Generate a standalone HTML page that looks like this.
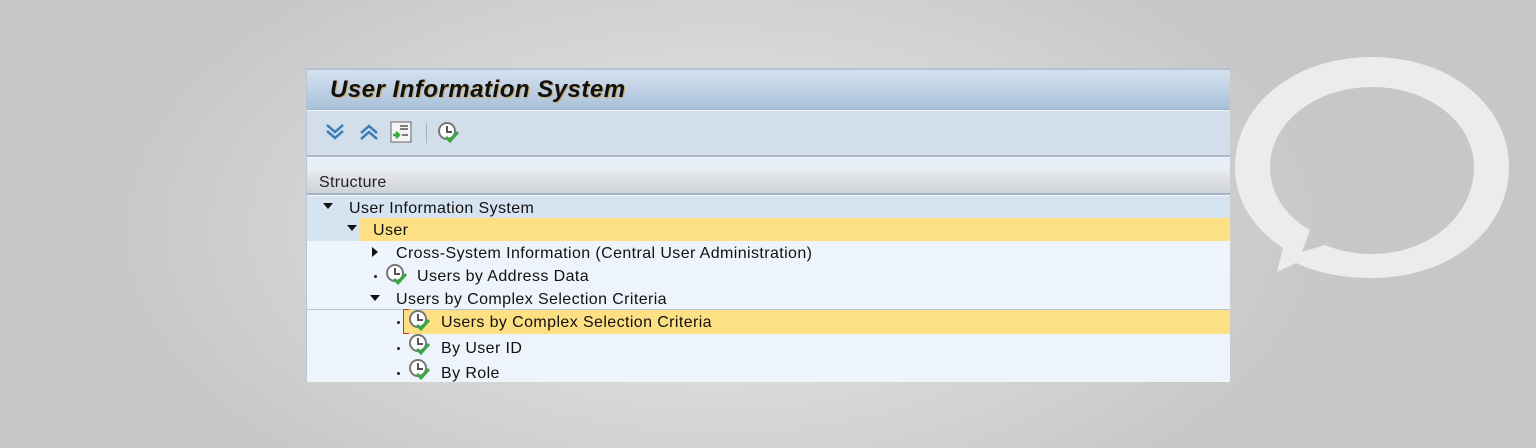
<!DOCTYPE html>
<html><head><meta charset="utf-8"><style>
*{margin:0;padding:0;box-sizing:border-box}
body{width:1536px;height:448px;overflow:hidden;position:relative;font-family:"Liberation Sans",sans-serif;
background:radial-gradient(ellipse 620px 330px at 720px 230px,#e6e6e6 0%,#dadada 45%,#c7c7c7 100%);}
.panel{position:absolute;left:306px;top:68px;width:924px;height:314px;background:#eef4fb;overflow:hidden;border-left:1px solid #b9c6d4}
.title{position:absolute;left:0;top:0;width:100%;height:42px;background:linear-gradient(#d5e1ed,#a9c1da);border-top:2px solid #b3c3d5;border-bottom:1px solid #9fb5cc}
.title span{position:absolute;left:23px;top:6px;font-size:24px;letter-spacing:0.5px;font-weight:bold;font-style:italic;color:#111;text-shadow:1px 1px 1px #c9a860}
.tb{position:absolute;left:0;top:43px;width:100%;height:46px;background:#d2dfeb;border-bottom:2px solid #aab9c9}
.gap{position:absolute;left:0;top:90px;width:100%;height:14px;background:#e8eef5}
.hdr{position:absolute;left:0;top:104px;width:100%;height:23px;background:linear-gradient(#e6e8eb,#cfd3d8);border-bottom:2px solid #a5b3c2;font-size:16px;letter-spacing:0.3px;color:#222;padding:2px 12px}
.row{position:absolute;left:0;width:100%;height:23px;font-size:16px;letter-spacing:0.4px;color:#111;line-height:25px;white-space:nowrap}
.row .t{position:absolute}
.tri{position:absolute;width:0;height:0}
.dn{border-left:5px solid transparent;border-right:5px solid transparent;border-top:6px solid #111}
.rt{border-top:5px solid transparent;border-bottom:5px solid transparent;border-left:6px solid #111}
.dot{position:absolute;width:3px;height:3px;background:#222;border-radius:50%}
.ic{position:absolute}
</style></head><body>
<svg style="position:absolute;left:1230px;top:50px" width="300" height="240">
<path fill="#ececec" fill-rule="evenodd" d="M142 7 C220 7 279 55 279 117 C279 180 220 228 142 228 C110 228 86 222 66 213 L47 222 L53 198 C23 178 5 150 5 117 C5 55 64 7 142 7 Z M142 37 C85 37 40 73 40 117 C40 145 57 167 80 180 L72 202 L95 195 C110 201 126 204 142 204 C200 204 244 165 244 117 C244 73 200 37 142 37 Z"/>
</svg>
<div class="panel">
 <div class="title"><span>User Information System</span></div>
 <div class="tb">
  <svg class="ic" style="left:18px;top:12px" width="20" height="18"><path d="M2 2 L10 9 L18 2" stroke="#3a7db8" stroke-width="2.5" fill="none"/><path d="M2 8 L10 15 L18 8" stroke="#3a7db8" stroke-width="2.5" fill="none"/></svg>
  <svg class="ic" style="left:52px;top:12px" width="20" height="18"><path d="M2 10 L10 3 L18 10" stroke="#3a7db8" stroke-width="2.5" fill="none"/><path d="M2 16 L10 9 L18 16" stroke="#3a7db8" stroke-width="2.5" fill="none"/></svg>
  <svg class="ic" style="left:83px;top:10px" width="22" height="22"><rect x="1" y="1" width="20" height="20" fill="#f4f4f4" stroke="#666"/><path d="M10 5h8M10 8h8M12 14h6" stroke="#555" stroke-width="1.5"/><path d="M3 14h5M6 11l3 3-3 3" stroke="#3aa83a" stroke-width="2.5" fill="none"/></svg>
  <div style="position:absolute;left:119px;top:12px;width:1px;height:20px;background:#9fb3c8"></div>
  <svg class="ic" style="left:130px;top:10px" width="24" height="24"><circle cx="10" cy="10" r="8" fill="#fff" stroke="#777" stroke-width="2"/><path d="M10 5v6h5" stroke="#555" stroke-width="2" fill="none"/><path d="M9 16l4 4 8-9" stroke="#39a845" stroke-width="3" fill="none"/></svg>
 </div>
 <div class="gap"></div>
 <div class="hdr">Structure</div>
 <div class="row" style="top:128px;background:#d6e3f1;border-bottom:1px solid #b5c6d8"><i class="tri dn" style="left:16px;top:7px"></i><span class="t" style="left:42px">User Information System</span></div>
 <div class="row" style="top:150px;background:#d6e3f1"><div style="position:absolute;left:52px;top:0;right:0;height:23px;background:#fddf84"></div><i class="tri dn" style="left:40px;top:7px"></i><span class="t" style="left:66px">User</span></div>
 <div class="row" style="top:173px"><i class="tri rt" style="left:65px;top:6px"></i><span class="t" style="left:89px">Cross-System Information (Central User Administration)</span></div>
 <div class="row" style="top:196px"><i class="dot" style="left:67px;top:11px"></i>
  <svg class="ic" style="left:78px;top:-1px" width="24" height="24"><circle cx="10" cy="10" r="8" fill="#fff" stroke="#777" stroke-width="2"/><path d="M10 5v6h5" stroke="#555" stroke-width="2" fill="none"/><path d="M9 16l4 4 8-9" stroke="#39a845" stroke-width="3" fill="none"/></svg>
  <span class="t" style="left:110px">Users by Address Data</span></div>
 <div class="row" style="top:219px;border-bottom:1px solid #b5c6d8"><i class="tri dn" style="left:63px;top:8px"></i><span class="t" style="left:89px">Users by Complex Selection Criteria</span></div>
 <div class="row" style="top:242px"><div style="position:absolute;left:97px;top:0;right:0;height:24px;background:#fddf84"></div>
  <div style="position:absolute;left:96px;top:-1px;width:6px;height:25px;border:1px solid #c33;border-right:none"></div>
  <i class="dot" style="left:90px;top:11px"></i>
  <svg class="ic" style="left:101px;top:-1px" width="24" height="24"><circle cx="10" cy="10" r="8" fill="#fff" stroke="#777" stroke-width="2"/><path d="M10 5v6h5" stroke="#555" stroke-width="2" fill="none"/><path d="M9 16l4 4 8-9" stroke="#39a845" stroke-width="3" fill="none"/></svg>
  <span class="t" style="left:134px">Users by Complex Selection Criteria</span></div>
 <div class="row" style="top:268px"><i class="dot" style="left:90px;top:11px"></i>
  <svg class="ic" style="left:101px;top:-3px" width="24" height="24"><circle cx="10" cy="10" r="8" fill="#fff" stroke="#777" stroke-width="2"/><path d="M10 5v6h5" stroke="#555" stroke-width="2" fill="none"/><path d="M9 16l4 4 8-9" stroke="#39a845" stroke-width="3" fill="none"/></svg>
  <span class="t" style="left:134px">By User ID</span></div>
 <div class="row" style="top:293px"><i class="dot" style="left:90px;top:11px"></i>
  <svg class="ic" style="left:101px;top:-3px" width="24" height="24"><circle cx="10" cy="10" r="8" fill="#fff" stroke="#777" stroke-width="2"/><path d="M10 5v6h5" stroke="#555" stroke-width="2" fill="none"/><path d="M9 16l4 4 8-9" stroke="#39a845" stroke-width="3" fill="none"/></svg>
  <span class="t" style="left:134px">By Role</span></div>
</div>
</body></html>
